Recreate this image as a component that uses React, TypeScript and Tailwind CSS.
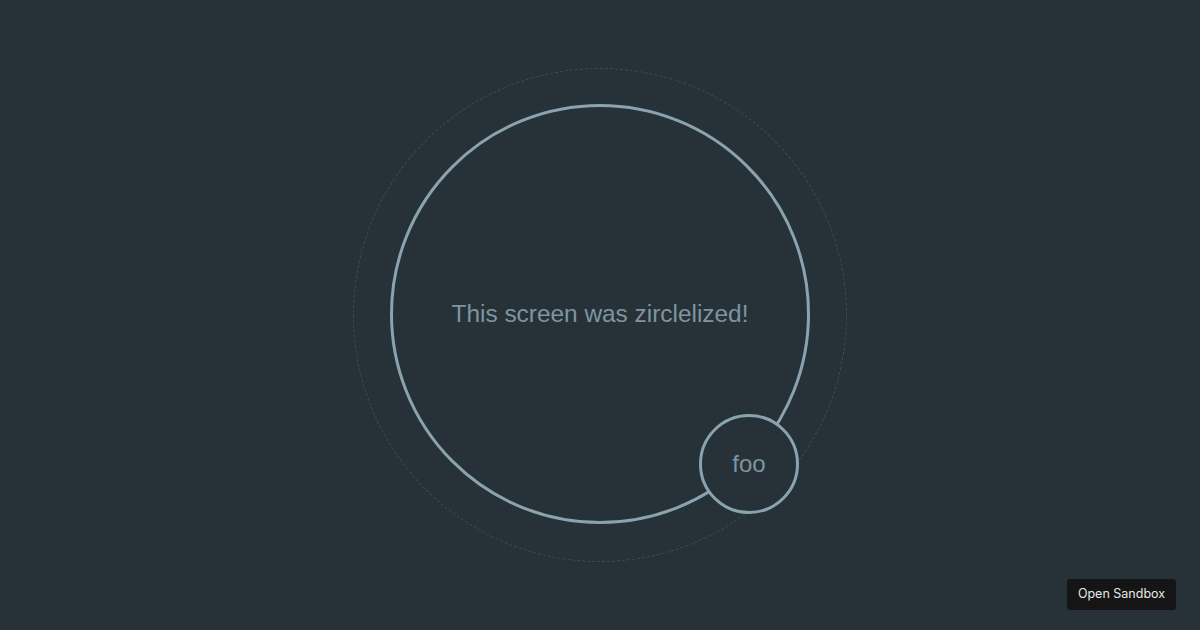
export default function App() {
  return (
    <div className="relative flex h-[630px] w-full items-center justify-center overflow-hidden bg-[#263238] font-['Liberation_Sans',Arial,sans-serif]">
      <div className="relative flex h-[494px] w-[494px] items-center justify-center rounded-full border border-dashed border-[#3d4e57]">
        <div className="relative flex h-[420px] w-[420px] -translate-y-px items-center justify-center rounded-full border-[3px] border-[#8ba3ae]">
          <span className="text-[24.4px] text-[#7e95a0]">This screen was zirclelized!</span>
          <div className="absolute left-[306px] top-[307px] flex h-[100px] w-[100px] items-center justify-center rounded-full border-[3px] border-[#8ba3ae] bg-[#263238]">
            <span className="text-[24px] text-[#7e95a0]">foo</span>
          </div>
        </div>
      </div>
      <button className="absolute bottom-[20px] right-[24px] h-[31px] w-[109px] rounded-[3px] bg-[#151515] font-['Inter',sans-serif] text-[12.5px] text-[#e8e8e8]">
        Open Sandbox
      </button>
    </div>
  );
}
